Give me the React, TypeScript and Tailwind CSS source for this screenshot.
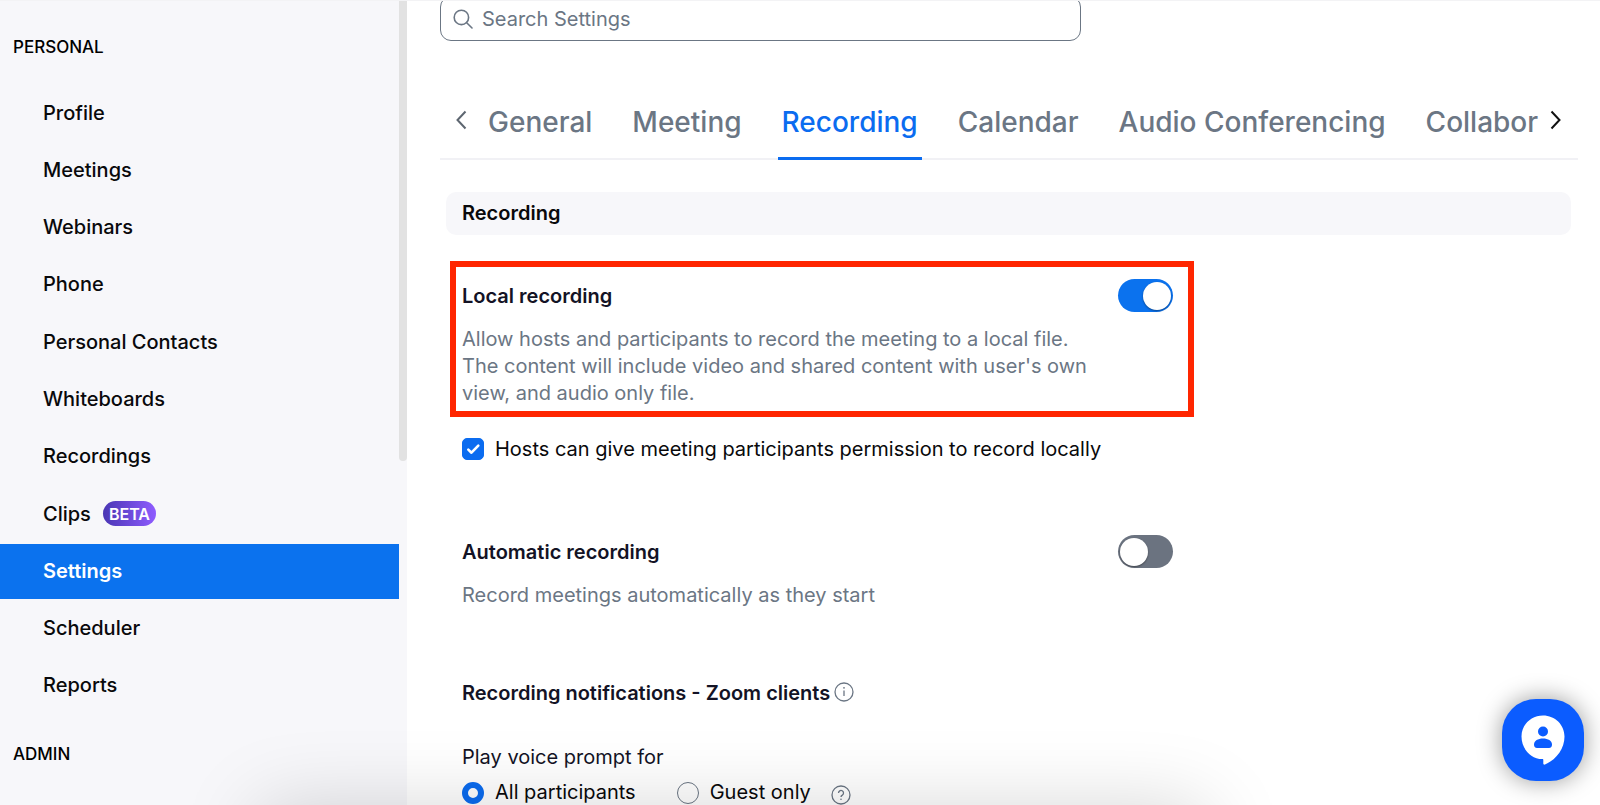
import { useState } from "react";

const navItems = [
  "Profile",
  "Meetings",
  "Webinars",
  "Phone",
  "Personal Contacts",
  "Whiteboards",
  "Recordings",
  "Clips",
  "Settings",
  "Scheduler",
  "Reports",
];

const tabs = ["General", "Meeting", "Recording", "Calendar", "Audio Conferencing"];

function Sidebar() {
  return (
    <aside className="flex w-[407px] shrink-0 bg-[#f7f7fa]">
      <nav aria-label="Account" className="min-w-0 grow pt-[34px]">
        <h2 className="px-[13px] text-[17px] leading-[24px] font-medium text-black">PERSONAL</h2>
        <ul className="mt-[27px] flex h-[628px] flex-col justify-between">
          {navItems.map((item) => (
            <li key={item}>
              <a
                href={"#" + item.toLowerCase().replace(" ", "-")}
                aria-current={item === "Settings" ? "page" : undefined}
                className={
                  item === "Settings"
                    ? "flex h-[55px] items-center bg-[#0b72ee] pb-[2px] pl-[43px] text-[20px] font-semibold text-white"
                    : "flex h-[55px] items-center pb-[2px] pl-[43px] text-[20px] font-medium text-[#09090b]"
                }
              >
                {item}
                {item === "Clips" && (
                  <span className="ml-[12px] flex h-[25px] items-center rounded-full bg-linear-to-r from-[#4a36b4] to-[#8f5cff] px-[6px] text-[16px] font-semibold text-white">
                    BETA
                  </span>
                )}
              </a>
            </li>
          ))}
        </ul>
        <h2 className="mt-[28px] px-[13px] text-[17px] leading-[24px] font-medium text-black">ADMIN</h2>
      </nav>
      <div className="h-[460px] w-[8px] shrink-0 rounded-b-full bg-[#e2e2e2]" />
    </aside>
  );
}

function Toggle({ label, initial }: { label: string; initial: boolean }) {
  const [on, setOn] = useState(initial);
  return (
    <button
      type="button"
      role="switch"
      aria-checked={on}
      aria-label={label}
      onClick={() => setOn(!on)}
      className={
        on
          ? "flex h-[33px] w-[55px] shrink-0 items-center justify-end rounded-full bg-[#0b72ee] px-[2px]"
          : "flex h-[33px] w-[55px] shrink-0 items-center rounded-full bg-[#6b7380] px-[2px]"
      }
    >
      <span className="size-[28px] rounded-full bg-white shadow-[0_1px_2px_rgba(0,0,0,0.4)]" />
    </button>
  );
}

export default function App() {
  const [audience, setAudience] = useState("all");
  return (
    <div className="relative flex h-screen overflow-hidden border-t border-[#f3f3f5] bg-white font-['Inter','Liberation_Sans',sans-serif]">
      <Sidebar />
      <main className="min-w-0 grow pr-[22px] pl-[33px]">
        <div className="-mt-[5px] flex h-[45px] w-[641px] items-center gap-[9px] rounded-[11px] border border-[#6b7684] px-[12px]">
          <svg viewBox="0 0 20 20" className="size-[20px] shrink-0" fill="none" stroke="#6b7684" strokeWidth="1.6" strokeLinecap="round">
            <circle cx="8.4" cy="8.4" r="7.2" />
            <path d="M13.7 13.7 19 19" />
          </svg>
          <input
            type="text"
            aria-label="Search Settings"
            placeholder="Search Settings"
            className="min-w-0 grow text-[20px] leading-[28px] text-[#6b7684] outline-none placeholder:text-[#6b7684]"
          />
        </div>

        <div className="mt-[49px] flex h-[70px] items-start border-b-2 border-[#f1f1f5]">
          <button type="button" aria-label="Previous tabs" className="ml-[15px] flex h-[60px] w-[29px] shrink-0 items-center">
            <svg viewBox="0 0 12 20" className="h-[20px] w-[12px]" fill="none" stroke="#5d6670" strokeWidth="2">
              <path d="M10.5 1.5 2.5 10l8 8.500" />
            </svg>
          </button>
          <div role="tablist" className="flex min-w-0 grow items-start gap-[32px] overflow-hidden">
            {tabs.map((tab) => (
              <button
                key={tab}
                type="button"
                role="tab"
                aria-selected={tab === "Recording"}
                className={
                  tab === "Recording"
                    ? "h-[70px] shrink-0 border-b-3 border-[#0b6cf0] px-[4px] pb-[3px] text-[28px] font-medium text-[#0b6cf0]"
                    : "h-[70px] shrink-0 px-[4px] pb-[6px] text-[28px] font-medium text-[#6b7684]"
                }
              >
                {tab}
              </button>
            ))}
            <button type="button" role="tab" aria-selected={false} className="h-[70px] shrink-0 px-[4px] pb-[6px] text-[28px] font-medium text-[#6b7684]">
              Collabor
            </button>
          </div>
          <button type="button" aria-label="Next tabs" className="mr-[16px] flex h-[60px] w-[12px] shrink-0 items-center">
            <svg viewBox="0 0 12 20" className="h-[20px] w-[12px]" fill="none" stroke="#111" strokeWidth="2">
              <path d="m1.500 1.500 8 8.500-8 8.500" />
            </svg>
          </button>
        </div>

        <h1 className="mt-[32px] mr-[7px] ml-[6px] flex h-[43px] items-center rounded-[10px] bg-[#f7f7fa] px-[16px] pb-[2px] text-[20px] font-semibold text-[#09090b]">
          Recording
        </h1>

        <section className="mt-[26px] ml-[10px] flex h-[156px] w-[744px] justify-between border-6 border-[#ff2600] pt-[12px] pr-[15px] pl-[6px]">
          <div>
            <h2 className="mt-[4px] text-[20px] leading-[27px] font-semibold text-[#131325]">Local recording</h2>
            <p className="mt-[16px] text-[20px] leading-[27px] text-[#6b7684]">
              Allow hosts and participants to record the meeting to a local file.
              <br />
              The content will include video and shared content with user's own
              <br />
              view, and audio only file.
            </p>
          </div>
          <Toggle label="Local recording" initial={true} />
        </section>

        <label className="mt-[18px] ml-[22px] flex items-center gap-[11px] text-[20px] leading-[28px] text-[#09090b]">
          <span className="grid size-[22px] shrink-0">
            <input type="checkbox" defaultChecked className="peer col-start-1 row-start-1 size-[22px] appearance-none rounded-[5px] border border-[#6b7684] checked:border-[#0b6cf0] checked:bg-[#0b6cf0]" />
            <svg viewBox="0 0 22 22" className="pointer-events-none invisible col-start-1 row-start-1 size-[22px] peer-checked:visible" fill="none" stroke="#fff" strokeWidth="2.600" strokeLinecap="round" strokeLinejoin="round">
              <path d="m6.300 11.600 3.200 3.100 6.800-7" />
            </svg>
          </span>
          Hosts can give meeting participants permission to record locally
        </label>

        <section className="mt-[72px] ml-[22px] flex w-[711px] items-start justify-between">
          <div>
            <h2 className="mt-[4px] text-[20px] leading-[27px] font-semibold text-[#131325]">Automatic recording</h2>
            <p className="mt-[16px] text-[20px] leading-[27px] text-[#6b7684]">Record meetings automatically as they start</p>
          </div>
          <Toggle label="Automatic recording" initial={false} />
        </section>

        <section className="mt-[71px] ml-[22px]">
          <div className="flex items-center gap-[4px]">
            <h2 className="text-[20px] leading-[27px] font-semibold text-[#131325]">Recording notifications - Zoom clients</h2>
            <svg viewBox="0 0 20 20" className="mb-[4px] size-[20px]" fill="none" stroke="#6b7684" strokeWidth="1.300">
              <circle cx="10" cy="10" r="9" />
              <path d="M10 8.500v5.500" />
              <circle cx="10" cy="5.800" r=".9" fill="#6b7684" stroke="none" />
            </svg>
          </div>
          <fieldset className="mt-[37px] text-[20px] text-[#131325]">
            <legend className="leading-[27px]">Play voice prompt for</legend>
            <div className="mt-[8px] flex items-center text-[#09090b]">
              <label className="flex items-center gap-[11px] leading-[27px]">
                <input
                  type="radio"
                  name="audience"
                  checked={audience === "all"}
                  onChange={() => setAudience("all")}
                  className="size-[22px] appearance-none rounded-full border border-[#6b7684] checked:border-6 checked:border-[#0b6cf0]"
                />
                All participants
              </label>
              <label className="ml-[41px] flex items-center gap-[11px] leading-[27px]">
                <input
                  type="radio"
                  name="audience"
                  checked={audience === "guest"}
                  onChange={() => setAudience("guest")}
                  className="size-[22px] appearance-none rounded-full border border-[#6b7684] checked:border-6 checked:border-[#0b6cf0]"
                />
                Guest only
              </label>
              <svg viewBox="0 0 20 20" className="mt-[5px] ml-[20px] size-[20px]" fill="none" stroke="#6b7684" strokeWidth="1.300">
                <circle cx="10" cy="10" r="9" />
                <path d="M7.500 8a2.500 2.500 0 1 1 3.800 2.100c-.9.500-1.300.9-1.300 2" />
                <circle cx="10" cy="14.300" r=".8" fill="#6b7684" stroke="none" />
              </svg>
            </div>
          </fieldset>
        </section>
      </main>

      <div className="pointer-events-none absolute right-[395px] -bottom-[100px] left-[260px] h-[97px] shadow-[0_0_80px_rgba(0,0,0,0.17)]" />

      <button
        type="button"
        aria-label="Chat support"
        className="absolute right-[16px] bottom-[24px] flex size-[82px] items-center justify-center rounded-[34px] bg-[#0b5cff] shadow-[0_0_24px_rgba(0,0,0,0.4)]"
      >
        <svg viewBox="0 0 44 50" className="h-[50px] w-[44px]" fill="#fff">
          <path d="M22 0.500C10 .5.500 9.800.500 21.500.500 33.500 9.500 44 21.300 44c.7 0 1 .4 1 1v3.500c0 1 .8 1.400 1.700 1C35.500 44.500 43.500 33.500 43.500 21.500 43.500 9.800 34 .5 22 .5Z" />
          <circle cx="22" cy="16.500" r="5" fill="#0b5cff" />
          <path d="M13 29.500c0-3.800 4-6 9-6s9 2.200 9 6c0 2-1 3.500-3 3.500H16c-2 0-3-1.500-3-3.500Z" fill="#0b5cff" />
        </svg>
      </button>
    </div>
  );
}
